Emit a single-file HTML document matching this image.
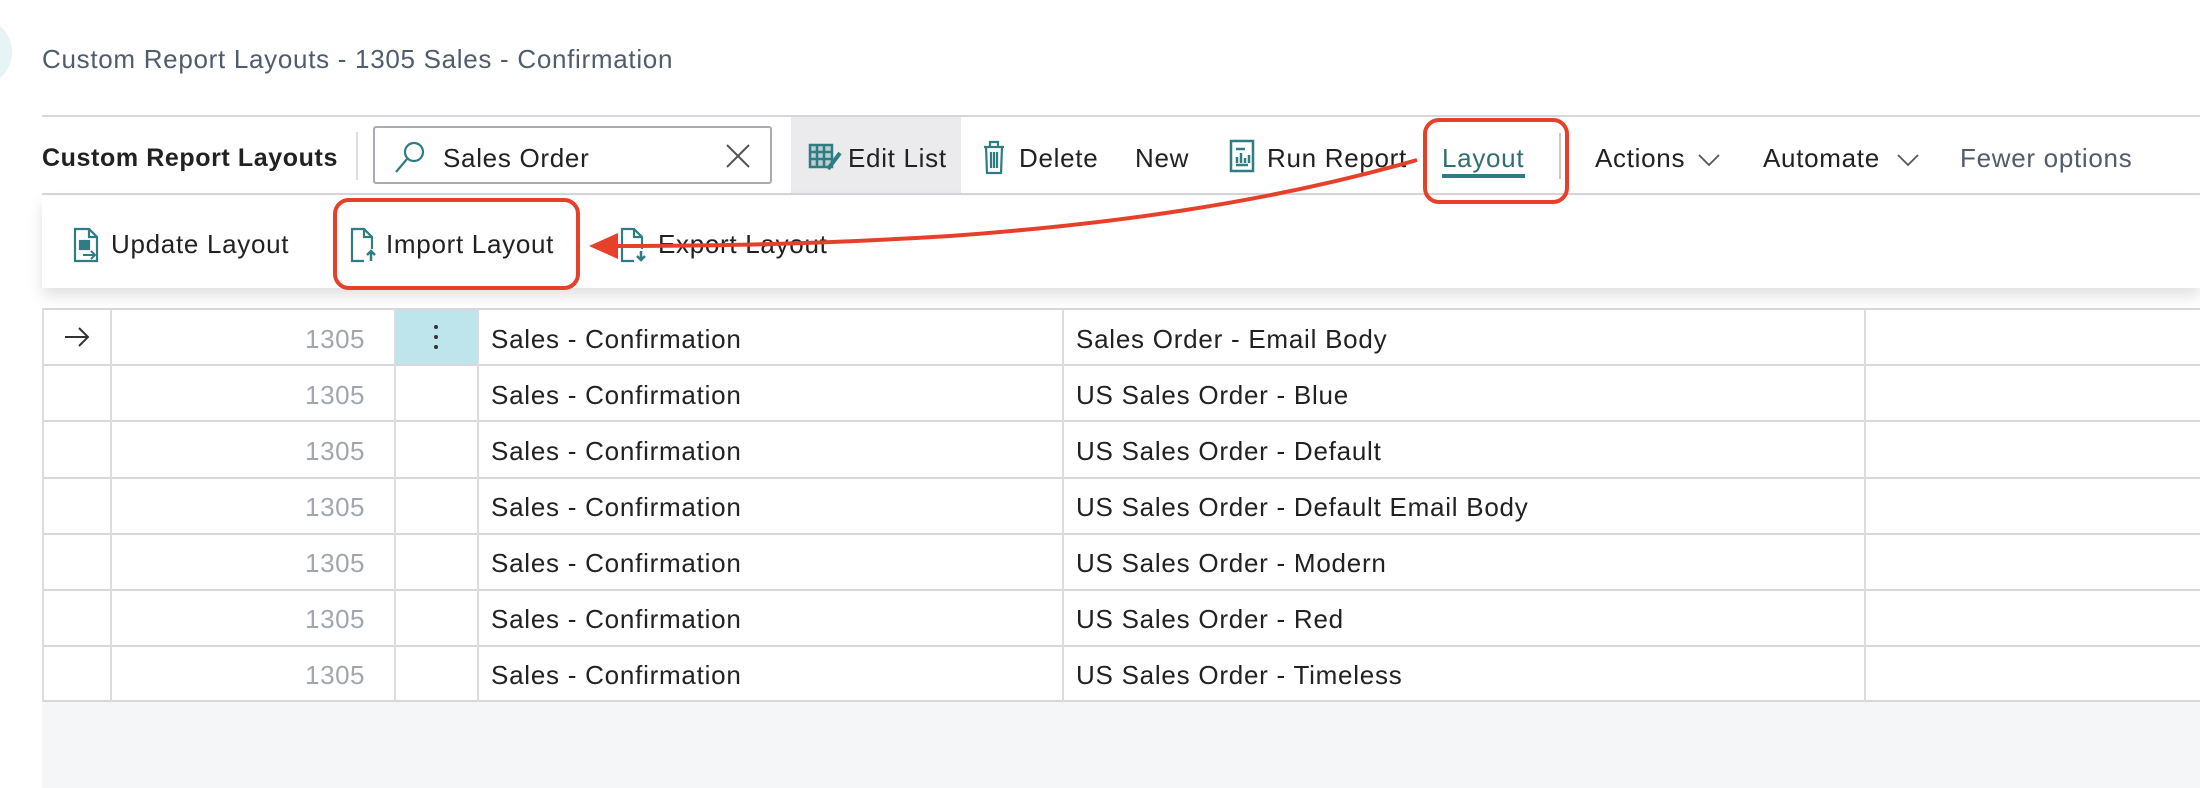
<!DOCTYPE html>
<html><head><meta charset="utf-8"><style>
*{margin:0;padding:0;box-sizing:border-box}
body{width:2200px;height:788px;background:#fff;font-family:"Liberation Sans",sans-serif;color:#212121;position:relative;overflow:hidden}
.a{position:absolute;white-space:nowrap}
.t{font-size:26px;line-height:28px;letter-spacing:0.7px}
.ic{position:absolute}
.hl{position:absolute;left:42px;right:0;background:#d6d6db}
.vl{position:absolute;width:2px;background:#dcdce0;top:309px;height:393px}
.num{position:absolute;width:100px;text-align:right;left:265px;color:#a2a6ad;font-size:26px;line-height:28px;letter-spacing:0.5px}
.c3{position:absolute;left:491px;font-size:26px;line-height:28px;letter-spacing:0.75px}
.c4{position:absolute;left:1076px;font-size:26px;line-height:28px;letter-spacing:0.75px}
</style></head><body>
<div class="a" style="left:-38px;top:22px;width:50px;height:60px;border-radius:50%;background:#e6f4f5"></div>
<div class="a" style="left:42px;top:44px;font-size:26px;letter-spacing:0.7px;color:#505c6d">Custom Report Layouts - 1305 Sales - Confirmation</div>
<div class="hl" style="top:115px;height:2px"></div>
<div class="a" style="left:791px;top:117px;width:170px;height:77px;background:#ebebee"></div>
<div class="a" style="left:42px;top:144px;font-size:25px;line-height:28px;letter-spacing:0.6px;font-weight:bold">Custom Report Layouts</div>
<div class="a" style="left:356px;top:132px;width:2px;height:48px;background:#dcdce0"></div>
<div class="a" style="left:373px;top:126px;width:399px;height:58px;border:2px solid #a8abb2;border-radius:3px"></div>
<svg class="ic" style="left:393px;top:140px" width="34" height="34" viewBox="0 0 34 34" fill="none" stroke="#2f7d83" stroke-width="2.2"><circle cx="21" cy="12" r="9"/><path d="M14 19L3 32"/></svg>
<div class="a t" style="left:443px;top:144px">Sales Order</div>
<svg class="ic" style="left:725px;top:143px" width="26" height="26" stroke="#555" stroke-width="2"><path d="M2 2L24 24M24 2L2 24"/></svg>
<svg class="ic" style="left:808px;top:143px" width="34" height="30" fill="none" stroke="#2f7d83" stroke-width="2.5"><rect x="2" y="2" width="22" height="22" fill="#2f7d83" fill-opacity=".25"/><path d="M2 9H24M2 16H24M9 2V24M16 2V24"/><path d="M32 10L20 26" stroke-width="4"/></svg>
<div class="a t" style="left:848px;top:144px">Edit List</div>
<svg class="ic" style="left:983px;top:139px" width="22" height="36" fill="none" stroke="#2f7d83" stroke-width="2.2"><path d="M1 8H21M7 8V3H15V8M3 8L4 34H18L19 8M8 13V29M11 13V29M14 13V29"/></svg>
<div class="a t" style="left:1019px;top:144px">Delete</div>
<div class="a t" style="left:1135px;top:144px">New</div>
<svg class="ic" style="left:1229px;top:139px" width="26" height="34" fill="none" stroke="#2f7d83" stroke-width="2.5"><rect x="2" y="2" width="22" height="30"/><path d="M7 10H16M7 26H19M8 24V18M12 24V14M16 24V19M20 24V16"/></svg>
<div class="a t" style="left:1267px;top:144px">Run Report</div>
<div class="a t" style="left:1442px;top:144px;color:#2f6e73">Layout</div>
<div class="a" style="left:1442px;top:174px;width:83px;height:4px;background:#2f7d83"></div>
<div class="a" style="left:1559px;top:133px;width:2px;height:46px;background:#c8c8cc"></div>
<div class="a t" style="left:1595px;top:144px">Actions</div>
<svg class="ic" style="left:1697px;top:152px" width="24" height="16" fill="none" stroke="#555" stroke-width="1.8"><path d="M2 3L12 13L22 3"/></svg>
<div class="a t" style="left:1763px;top:144px">Automate</div>
<svg class="ic" style="left:1896px;top:152px" width="24" height="16" fill="none" stroke="#555" stroke-width="1.8"><path d="M2 3L12 13L22 3"/></svg>
<div class="a t" style="left:1960px;top:144px;color:#505c6d">Fewer options</div>
<div class="hl" style="top:193px;height:2px"></div>
<!-- popup -->
<div class="a" style="left:42px;top:196px;width:2158px;height:92px;background:#fff;box-shadow:0 8px 14px rgba(0,0,0,.12)"></div>
<svg class="ic" style="left:73px;top:227px" width="28" height="36" fill="none" stroke="#2f7d83" stroke-width="2.2"><path d="M2 2H16L24 10V34H2Z"/><path d="M16 2V10H24"/><rect x="7" y="14" width="9" height="8" fill="#2f7d83"/><path d="M10 28H22M18 24L22 28L18 32" stroke-width="2"/></svg>
<div class="a t" style="left:111px;top:230px">Update Layout</div>
<svg class="ic" style="left:350px;top:227px" width="28" height="36" fill="none" stroke="#2f7d83" stroke-width="2.2"><path d="M14 34H2V2H14L22 10V22"/><path d="M14 2V10H22"/><path d="M21 34V25M17 28L21 24L25 28" stroke-width="2.5"/></svg>
<div class="a t" style="left:386px;top:230px">Import Layout</div>
<svg class="ic" style="left:620px;top:227px" width="28" height="36" fill="none" stroke="#2f7d83" stroke-width="2.2"><path d="M14 34H2V2H14L22 10V22"/><path d="M14 2V10H22"/><path d="M21 24V33M17 29L21 33L25 29" stroke-width="2.5"/></svg>
<div class="a t" style="left:658px;top:230px">Export Layout</div>
<!-- table -->
<div class="hl" style="top:308px;height:2px"></div>
<div class="hl" style="top:364px;height:2px"></div>
<div class="hl" style="top:420px;height:2px"></div>
<div class="hl" style="top:477px;height:2px"></div>
<div class="hl" style="top:533px;height:2px"></div>
<div class="hl" style="top:589px;height:2px"></div>
<div class="hl" style="top:645px;height:2px"></div>
<div class="hl" style="top:700px;height:2px"></div>
<div class="a" style="left:396px;top:310px;width:82px;height:54px;background:#bfe5ec"></div>
<div class="vl" style="left:42px"></div><div class="vl" style="left:110px"></div><div class="vl" style="left:394px"></div><div class="vl" style="left:477px"></div><div class="vl" style="left:1062px"></div><div class="vl" style="left:1864px"></div>
<svg class="ic" style="left:64px;top:326px" width="26" height="22" fill="none" stroke="#333" stroke-width="2"><path d="M1 11H24M15 2L24 11L15 20"/></svg>
<div class="a" style="left:434px;top:325px;width:4px;height:4px;border-radius:2px;background:#333;box-shadow:0 10px 0 #333,0 20px 0 #333"></div>
<div class="num" style="top:325px">1305</div><div class="c3" style="top:325px">Sales - Confirmation</div><div class="c4" style="top:325px">Sales Order - Email Body</div>
<div class="num" style="top:381px">1305</div><div class="c3" style="top:381px">Sales - Confirmation</div><div class="c4" style="top:381px">US Sales Order - Blue</div>
<div class="num" style="top:437px">1305</div><div class="c3" style="top:437px">Sales - Confirmation</div><div class="c4" style="top:437px">US Sales Order - Default</div>
<div class="num" style="top:493px">1305</div><div class="c3" style="top:493px">Sales - Confirmation</div><div class="c4" style="top:493px">US Sales Order - Default Email Body</div>
<div class="num" style="top:549px">1305</div><div class="c3" style="top:549px">Sales - Confirmation</div><div class="c4" style="top:549px">US Sales Order - Modern</div>
<div class="num" style="top:605px">1305</div><div class="c3" style="top:605px">Sales - Confirmation</div><div class="c4" style="top:605px">US Sales Order - Red</div>
<div class="num" style="top:661px">1305</div><div class="c3" style="top:661px">Sales - Confirmation</div><div class="c4" style="top:661px">US Sales Order - Timeless</div>
<div class="a" style="left:42px;top:702px;width:2158px;height:86px;background:#f5f6f8"></div>
<!-- annotations -->
<svg class="ic" style="left:0;top:0" width="2200" height="788" fill="none" stroke="#e6402a" stroke-width="4">
<rect x="1425" y="120" width="142" height="82" rx="14"/>
<rect x="335" y="200" width="243" height="88" rx="14"/>
<path d="M1417 160C1260 205 1100 225 950 236C820 244 720 246 612 246"/>
<path d="M589 246L618 233L618 259Z" fill="#e6402a" stroke="none"/>
</svg>
</body></html>
